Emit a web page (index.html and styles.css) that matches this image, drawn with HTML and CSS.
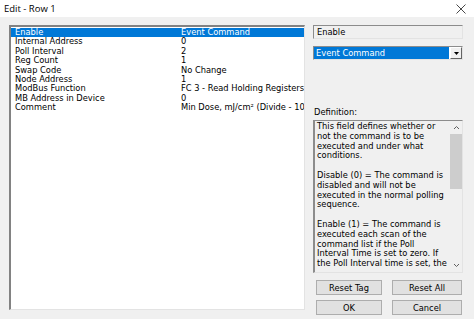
FILE: index.html
```html
<!DOCTYPE html>
<html>
<head>
<meta charset="utf-8">
<link rel="stylesheet" href="styles.css">
</head>
<body>
<div class="window">
  <div class="titlebar">
    <span class="title">Edit - Row 1</span>
    <svg class="close" width="10" height="10" viewBox="0 0 10 10"><path d="M0.5 0.5 L9.5 9.5 M9.5 0.5 L0.5 9.5" stroke="#333" stroke-width="0.9" fill="none"/></svg>
  </div>
  <div class="content">
    <div class="list">
      <div class="row sel"><span class="k">Enable</span><span class="v">Event Command</span></div>
      <div class="row"><span class="k">Internal Address</span><span class="v">0</span></div>
      <div class="row"><span class="k">Poll Interval</span><span class="v">2</span></div>
      <div class="row"><span class="k">Reg Count</span><span class="v">1</span></div>
      <div class="row"><span class="k">Swap Code</span><span class="v">No Change</span></div>
      <div class="row"><span class="k">Node Address</span><span class="v">1</span></div>
      <div class="row"><span class="k">ModBus Function</span><span class="v">FC 3 - Read Holding Registers(4x)</span></div>
      <div class="row"><span class="k">MB Address in Device</span><span class="v">0</span></div>
      <div class="row"><span class="k">Comment</span><span class="v">Min Dose, mJ/cm² (Divide - 100)</span></div>
    </div>
    <div class="side">
      <div class="field">Enable</div>
      <div class="combo">
        <div class="combo-text">Event Command</div>
        <div class="combo-btn"><svg width="5" height="3" viewBox="0 0 5 3"><path d="M0 0 H5 L2.5 3 Z" fill="#000"/></svg></div>
      </div>
      <div class="deflabel">Definition:</div>
      <div class="defbox">
        <div class="deftext">
          <p>This field defines whether or not the command is to be executed and under what conditions.</p>
          <p>Disable (0) = The command is disabled and will not be executed in the normal polling sequence.</p>
          <p>Enable (1) = The command is executed each scan of the command list if the Poll Interval Time is set to zero. If the Poll Interval time is set, the</p>
        </div>
        <div class="scroll">
          <svg class="arr" width="7" height="5" viewBox="0 0 7 5"><path d="M1 4 L3.5 1.5 L6 4" stroke="#606060" stroke-width="1" fill="none"/></svg>
          <div class="thumb"></div>
          <div class="track"></div>
          <svg class="arr" width="7" height="5" viewBox="0 0 7 5"><path d="M1 1 L3.5 3.5 L6 1" stroke="#606060" stroke-width="1" fill="none"/></svg>
        </div>
      </div>
      <div class="buttons">
        <button class="btn">Reset Tag</button>
        <button class="btn">Reset All</button>
        <button class="btn">OK</button>
        <button class="btn">Cancel</button>
      </div>
    </div>
  </div>
</div>
</body>
</html>
```
FILE: styles.css
```css
html, body { margin: 0; padding: 0; }
body {
  width: 474px;
  height: 319px;
  overflow: hidden;
  background: #f0f0f0;
  font-family: "DejaVu Sans", Verdana, sans-serif;
}
.window { width: 474px; height: 319px; display: flex; flex-direction: column; }
.titlebar {
  height: 17px;
  background: #ffffff;
  display: flex;
  align-items: center;
  justify-content: space-between;
  padding: 0 8px 0 4px;
  flex: none;
}
.title {
  font-family: "Open Sans", "Noto Sans", sans-serif;
  font-size: 9.5px;
  color: #000;
}
.close { display: block; }
.content {
  display: flex;
  padding: 8px 0 0 9px;
  gap: 8px;
}
.list {
  width: 293px;
  height: 281px;
  background: #fff;
  border-top: 2px solid #828282;
  border-left: 2px solid #828282;
  border-right: 1px solid #e3e3e3;
  border-bottom: 1px solid #e3e3e3;
  padding-top: 1px;
  overflow: hidden;
  font-size: 8.3px;
  color: #000;
}
.row {
  display: flex;
  height: 9.4px;
  line-height: 9.4px;
  white-space: nowrap;
}
.row.sel { background: #0078d7; color: #fff; }
.k { width: 166px; padding-left: 4px; flex: none; }
.v { flex: none; }
.side {
  width: 150px;
  display: flex;
  flex-direction: column;
}
.field {
  height: 12px;
  border-top: 1px solid #8c8c8c;
  border-left: 1px solid #8c8c8c;
  border-right: 1px solid #e3e3e3;
  border-bottom: 1px solid #e3e3e3;
  background: #f0f0f0;
  font-size: 8.3px;
  line-height: 12px;
  padding-left: 3px;
  color: #000;
}
.combo {
  margin-top: 7px;
  height: 12px;
  border-top: 1px solid #8c8c8c;
  border-left: 1px solid #8c8c8c;
  border-right: 1px solid #e3e3e3;
  border-bottom: 1px solid #e3e3e3;
  background: #fff;
  display: flex;
}
.combo-text {
  flex: 1;
  background: #0078d7;
  color: #fff;
  font-size: 8.3px;
  line-height: 12px;
  padding-left: 2px;
  margin-right: 1px;
}
.combo-btn {
  width: 10px;
  height: 10px;
  background: #f0f0f0;
  border-top: 1px solid #fff;
  border-left: 1px solid #fff;
  border-right: 1px solid #646464;
  border-bottom: 1px solid #646464;
  display: flex;
  align-items: center;
  justify-content: center;
}
.deflabel {
  margin-top: 47px;
  font-size: 8.3px;
  line-height: 10px;
  padding-left: 1px;
  color: #000;
}
.defbox {
  margin-top: 3px;
  height: 151px;
  display: flex;
  background: #f0f0f0;
  border-top: 1px solid #8c8c8c;
  border-left: 2px solid #8c8c8c;
  border-right: 1px solid #e3e3e3;
  border-bottom: 1px solid #e3e3e3;
  overflow: hidden;
}
.deftext {
  flex: 1;
  padding: 1px 3px 0 2px;
  font-size: 8.3px;
  line-height: 9.8px;
  color: #000;
}
.deftext p { margin: 0 0 9.8px 0; }
.scroll {
  width: 12px;
  display: flex;
  flex-direction: column;
  align-items: center;
  background: #f0f0f0;
}
.arr { display: block; margin: 4px 0; flex: none; }
.thumb { width: 12px; height: 55px; background: #cdcdcd; flex: none; }
.track { flex: 1; }
.buttons {
  margin-top: 7px;
  display: grid;
  grid-template-columns: 66px 70px;
  column-gap: 10px;
  row-gap: 5px;
  padding-left: 3px;
}
.btn {
  height: 15px;
  margin: 0;
  padding: 0;
  background: #e1e1e1;
  border: 1px solid #adadad;
  font-family: "DejaVu Sans", Verdana, sans-serif;
  font-size: 8.3px;
  color: #000;
}
```
